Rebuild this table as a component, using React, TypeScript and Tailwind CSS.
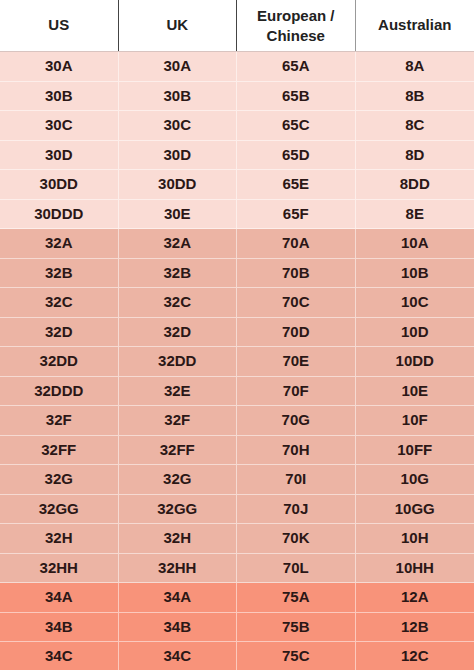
const SECTIONS: { bg: string; rows: string[][] }[] = [
  {
    bg: "bg-[#fadcd5]",
    rows: [
      ["30A", "30A", "65A", "8A"],
      ["30B", "30B", "65B", "8B"],
      ["30C", "30C", "65C", "8C"],
      ["30D", "30D", "65D", "8D"],
      ["30DD", "30DD", "65E", "8DD"],
      ["30DDD", "30E", "65F", "8E"],
    ],
  },
  {
    bg: "bg-[#ecb4a4]",
    rows: [
      ["32A", "32A", "70A", "10A"],
      ["32B", "32B", "70B", "10B"],
      ["32C", "32C", "70C", "10C"],
      ["32D", "32D", "70D", "10D"],
      ["32DD", "32DD", "70E", "10DD"],
      ["32DDD", "32E", "70F", "10E"],
      ["32F", "32F", "70G", "10F"],
      ["32FF", "32FF", "70H", "10FF"],
      ["32G", "32G", "70I", "10G"],
      ["32GG", "32GG", "70J", "10GG"],
      ["32H", "32H", "70K", "10H"],
      ["32HH", "32HH", "70L", "10HH"],
    ],
  },
  {
    bg: "bg-[#f8937a]",
    rows: [
      ["34A", "34A", "75A", "12A"],
      ["34B", "34B", "75B", "12B"],
      ["34C", "34C", "75C", "12C"],
    ],
  },
];

export default function App() {
  return (
    <div
      className="w-[474px] h-[670px] overflow-hidden bg-white text-[15px] font-bold"
      style={{ fontFamily: '"Liberation Sans", Arial, sans-serif' }}
    >
      {/* Kolonneoverskrift */}
      <div className="grid grid-cols-4 h-[52px] border-b border-[#d9c4c0] text-[#222]">
        <div className="flex items-center justify-center border-r border-[#444]">US</div>
        <div className="flex items-center justify-center border-r border-[#444]">UK</div>
        <div className="flex items-center justify-center border-r border-[#999] text-center leading-[20px]">
          European /
          <br />
          Chinese
        </div>
        <div className="flex items-center justify-center">Australian</div>
      </div>

      {SECTIONS.map((s, si) =>
        s.rows.map((r, ri) => (
          <div
            key={`${si}-${ri}`}
            className={`grid grid-cols-4 h-[29.5px] shrink-0 border-b border-white/50 text-[#2b1716] ${s.bg}`}
          >
            {r.map((c, ci) => (
              <div
                key={ci}
                className={`flex items-center justify-center ${ci < 3 ? "border-r border-white/50" : ""}`}
              >
                {c}
              </div>
            ))}
          </div>
        ))
      )}
    </div>
  );
}
